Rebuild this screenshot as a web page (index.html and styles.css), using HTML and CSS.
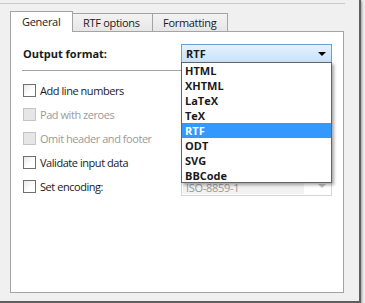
FILE: index.html
```html
<!DOCTYPE html>
<html lang="en">
<head>
    <meta charset="UTF-8">
    <meta name="viewport" content="width=device-width, initial-scale=1.0">
    <title>Options</title>
    <link rel="stylesheet" href="styles.css">
</head>
<body>
    <div class="window">
        <div class="top-rule"></div>
        <div class="dialog">
            <div class="tabs">
                <div class="tab active">General</div>
                <div class="tab">RTF options</div>
                <div class="tab">Formatting</div>
            </div>
            <div class="panel">
                <div class="format-row">
                    <div class="field-label">Output format:</div>
                    <div class="combo-wrap">
                        <div class="combo open">
                            <span>RTF</span>
                            <span class="arrow"></span>
                        </div>
                        <!-- opened list -->
                        <ul class="combo-list">
                            <li>HTML</li>
                            <li>XHTML</li>
                            <li>LaTeX</li>
                            <li>TeX</li>
                            <li class="selected">RTF</li>
                            <li>ODT</li>
                            <li>SVG</li>
                            <li>BBCode</li>
                        </ul>
                    </div>
                </div>
                <div class="separator"></div>
                <div class="check-row">
                    <span class="box"></span>
                    <span class="check-label">Add line numbers</span>
                </div>
                <div class="check-row disabled">
                    <span class="box"></span>
                    <span class="check-label">Pad with zeroes</span>
                </div>
                <div class="check-row disabled">
                    <span class="box"></span>
                    <span class="check-label">Omit header and footer</span>
                </div>
                <div class="check-row">
                    <span class="box"></span>
                    <span class="check-label">Validate input data</span>
                </div>
                <div class="check-row">
                    <div class="check-cell">
                        <span class="box"></span>
                        <span class="check-label">Set encoding:</span>
                    </div>
                    <div class="combo disabled">
                        <span class="combo-text">ISO-8859-1</span>
                        <span class="arrow"></span>
                    </div>
                </div>
            </div>
        </div>
    </div>
</body>
</html>
```

FILE: styles.css
```css
body {
    margin: 0;
    background: #ededed;
    font-family: "Open Sans", "Noto Sans", Arial, sans-serif;
    font-size: 11px;
    color: #1a1a1a;
}
.window {
    width: 359px;
    height: 298px;
    background: #f0f0f0;
    border-right: 2px solid #5e5e5e;
    border-bottom: 2px solid #5e5e5e;
    box-shadow: 1px 1px 2px rgba(0, 0, 0, 0.35);
    padding-top: 3px;
}
.top-rule {
    width: 345px;
    height: 1px;
    background: #c9c9c9;
}
.dialog {
    padding: 7px 0 0 10px;
}
.tabs {
    display: flex;
    align-items: flex-end;
    height: 20px;
}
.tab {
    box-sizing: border-box;
    height: 18px;
    line-height: 17px;
    padding-left: 10px;
    white-space: nowrap;
    letter-spacing: -0.3px;
    border: 1px solid #a4a4a4;
    border-bottom: none;
    border-left: none;
    background: linear-gradient(#f3f3f3, #e6e6e6);
}
.tab.active {
    height: 21px;
    line-height: 20px;
    margin-bottom: -1px;
    padding-left: 11px;
    border-left: 1px solid #a4a4a4;
    background: #fff;
    position: relative;
    z-index: 1;
    width: 63px;
}
.tab:nth-child(2) {
    width: 80px;
}
.tab:nth-child(3) {
    width: 75px;
}
.panel {
    box-sizing: border-box;
    width: 334px;
    height: 262px;
    background: #fff;
    border: 1px solid #a4a4a4;
    padding: 12px 11px 0 11px;
}
.format-row {
    display: flex;
    align-items: center;
    height: 19px;
}
.field-label {
    width: 159px;
    font-weight: bold;
    padding-left: 1px;
}
.combo-wrap {
    position: relative;
}
.combo {
    box-sizing: border-box;
    width: 151px;
    height: 19px;
    display: flex;
    align-items: center;
    justify-content: space-between;
    padding: 0 5px 0 4px;
}
.combo.open {
    border: 1px solid #6f9fd3;
    background: linear-gradient(#e4f1fd, #c9e2fa);
    font-weight: bold;
}
.arrow {
    width: 0;
    height: 0;
    border-left: 4px solid transparent;
    border-right: 4px solid transparent;
    border-top: 4px solid #000;
}
.combo.disabled {
    border: 1px solid #d5d5d5;
    padding: 1px 5px 1px 1px;
    color: #9a9a9a;
    letter-spacing: -0.3px;
}
.combo.disabled .combo-text {
    flex: 1;
    align-self: stretch;
    background: #f2f2f2;
    padding-left: 3px;
    line-height: 17px;
    margin-right: 14px;
}
.combo.disabled .arrow {
    border-top-color: #c2c2c2;
}
.combo-list {
    position: absolute;
    top: 18px;
    left: 0;
    z-index: 2;
    box-sizing: border-box;
    width: 151px;
    height: 121px;
    margin: 0;
    padding: 0;
    list-style: none;
    background: #fff;
    border: 1px solid #646464;
    box-shadow: 2px 2px 3px rgba(0, 0, 0, 0.35);
    font-weight: bold;
}
.combo-list li {
    height: 15px;
    line-height: 15px;
    padding-left: 3px;
}
.combo-list li.selected {
    background: #3399ff;
    color: #fff;
}
.separator {
    height: 1px;
    margin-top: 7px;
    background: #a4a4a4;
}
.check-row {
    display: flex;
    align-items: center;
    height: 24px;
}
.separator + .check-row {
    margin-top: 7px;
}
.check-cell {
    display: flex;
    align-items: center;
    width: 159px;
}
.check-label {
    letter-spacing: -0.45px;
}
.box {
    box-sizing: border-box;
    width: 13px;
    height: 13px;
    margin: 0 4px 0 1px;
    border: 1px solid #707070;
    background: linear-gradient(135deg, #e8e8e8, #fff 60%);
}
.check-row.disabled .box {
    border-color: #c4c4c4;
    background: #e6e6e6;
}
.check-row.disabled .check-label {
    color: #9a9a9a;
}
```
